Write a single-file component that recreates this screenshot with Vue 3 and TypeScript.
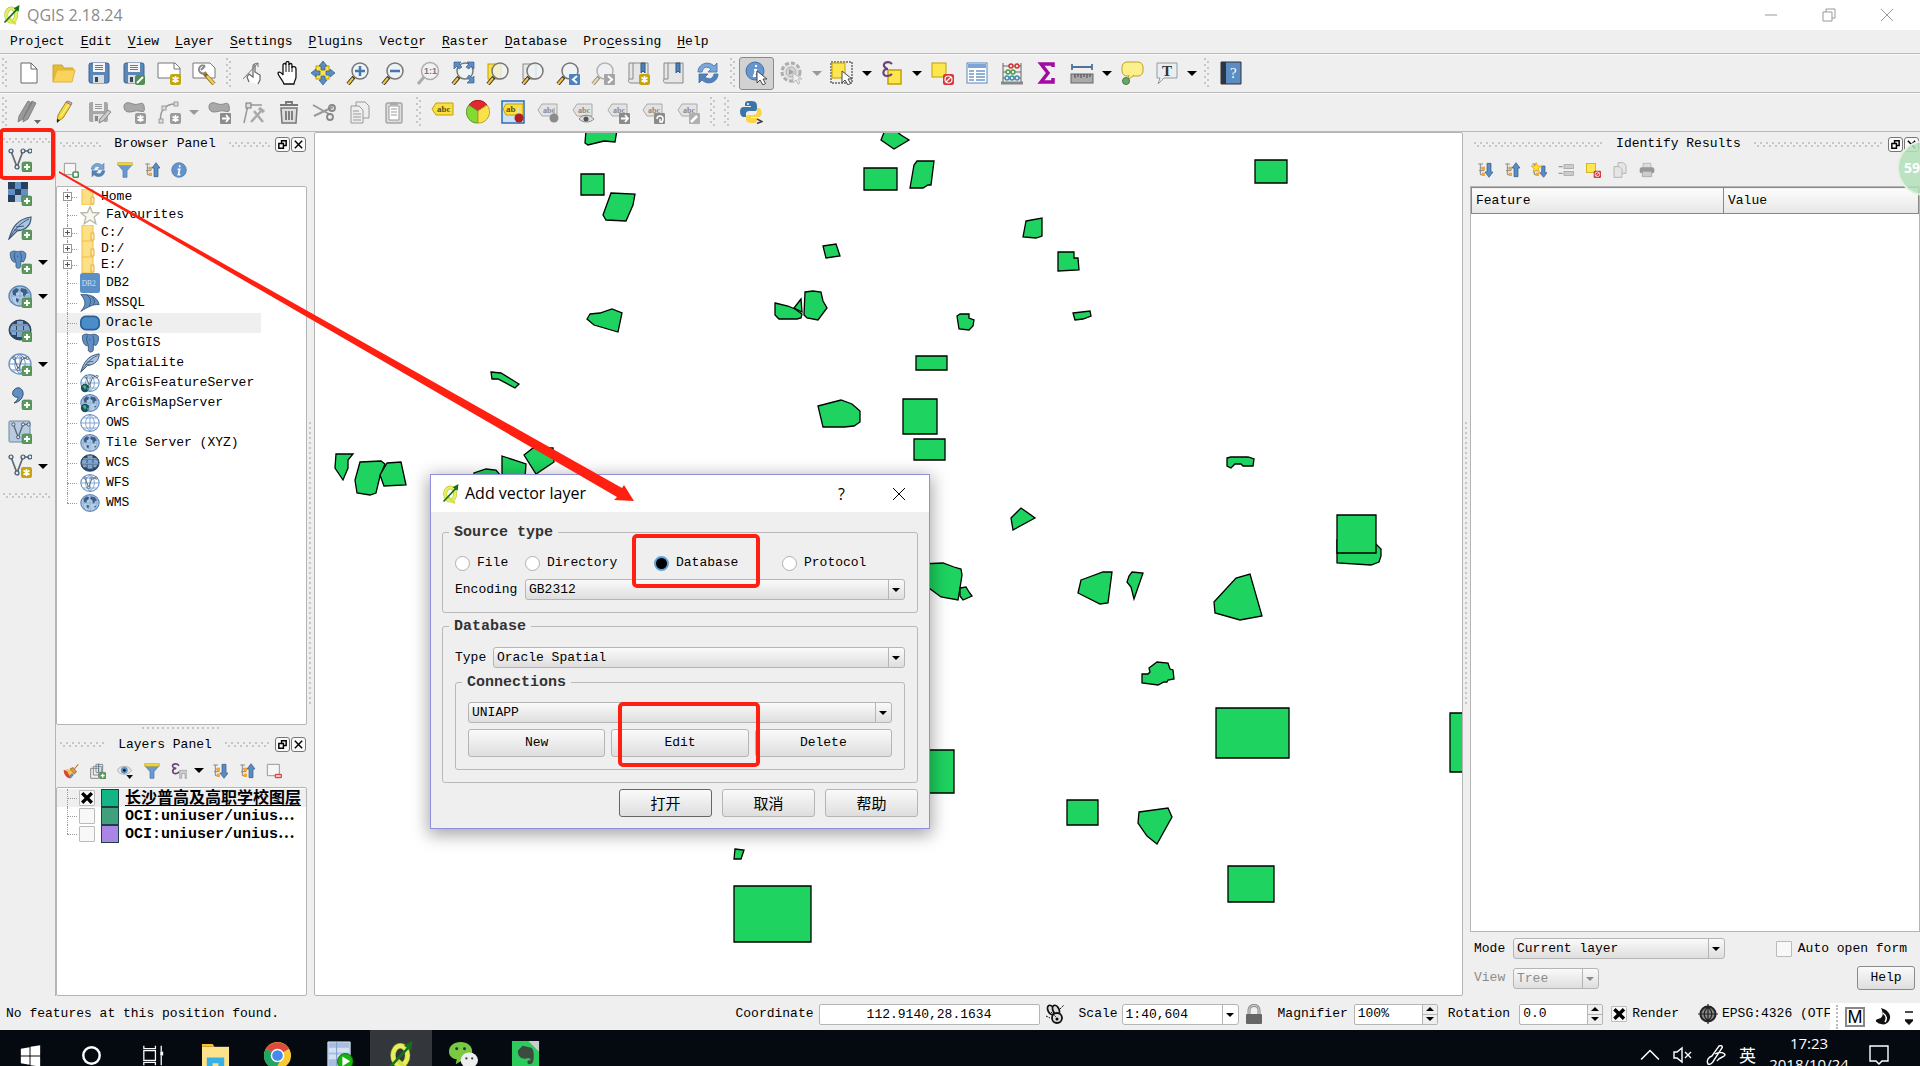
<script setup lang="ts">
import { ref } from 'vue'

interface Tool {
  icon: string
  label: string
  menu?: boolean
  off?: boolean
  active?: boolean
}
interface TreeItem {
  icon: string
  label: string
  kind: 'dir' | 'fav' | 'src'
  open?: boolean
}

const menus: [string, string, string][] = [
  ['Pro', 'j', 'ect'],
  ['', 'E', 'dit'],
  ['', 'V', 'iew'],
  ['', 'L', 'ayer'],
  ['', 'S', 'ettings'],
  ['', 'P', 'lugins'],
  ['Vect', 'o', 'r'],
  ['', 'R', 'aster'],
  ['', 'D', 'atabase'],
  ['Pro', 'c', 'essing'],
  ['', 'H', 'elp'],
]

const mainTools: Tool[][] = [
  [
    { icon: 'new', label: 'New' },
    { icon: 'open', label: 'Open' },
    { icon: 'save', label: 'Save' },
    { icon: 'saveas', label: 'Save As' },
    { icon: 'composer', label: 'New Print Composer' },
    { icon: 'manager', label: 'Composer Manager' },
  ],
  [
    { icon: 'touch', label: 'Touch Zoom and Pan' },
    { icon: 'hand', label: 'Pan Map' },
    { icon: 'pansel', label: 'Pan to Selection' },
    { icon: 'zoomin', label: 'Zoom In' },
    { icon: 'zoomout', label: 'Zoom Out' },
    { icon: 'zoomnative', label: 'Zoom to Native Resolution' },
    { icon: 'zoomfull', label: 'Zoom Full' },
    { icon: 'zoomsel', label: 'Zoom to Selection' },
    { icon: 'zoomlayer', label: 'Zoom to Layer' },
    { icon: 'zoomlast', label: 'Zoom Last' },
    { icon: 'zoomnext', label: 'Zoom Next' },
    { icon: 'bookmarknew', label: 'New Bookmark' },
    { icon: 'bookmark', label: 'Show Bookmarks' },
    { icon: 'refresh', label: 'Refresh' },
  ],
  [
    { icon: 'identify', label: 'Identify Features', active: true },
    { icon: 'action', label: 'Run Feature Action', menu: true, off: true },
    { icon: 'select', label: 'Select Features', menu: true },
    { icon: 'expression', label: 'Select by Expression', menu: true },
    { icon: 'deselect', label: 'Deselect Features' },
    { icon: 'table', label: 'Open Attribute Table' },
    { icon: 'abacus', label: 'Field Calculator' },
    { icon: 'sigma', label: 'Statistical Summary' },
    { icon: 'measure', label: 'Measure', menu: true },
    { icon: 'tips', label: 'Map Tips' },
    { icon: 'annotation', label: 'Text Annotation', menu: true },
  ],
  [{ icon: 'help', label: 'Help Contents' }],
]

const editTools: Tool[][] = [
  [
    { icon: 'pencils', label: 'Current Edits' },
    { icon: 'pencil', label: 'Toggle Editing' },
    { icon: 'saveedits', label: 'Save Layer Edits' },
    { icon: 'addfeature', label: 'Add Feature' },
    { icon: 'curve', label: 'Add Circular String', menu: true, off: true },
    { icon: 'movefeature', label: 'Move Feature' },
    { icon: 'nodetool', label: 'Node Tool' },
    { icon: 'trash', label: 'Delete Selected' },
    { icon: 'cut', label: 'Cut Features' },
    { icon: 'copy', label: 'Copy Features' },
    { icon: 'paste', label: 'Paste Features' },
  ],
  [
    { icon: 'label', label: 'Layer Labeling Options' },
    { icon: 'diagram', label: 'Layer Diagram Options' },
    { icon: 'labelpin', label: 'Highlight Pinned Labels' },
    { icon: 'labelpinoff', label: 'Pin Labels' },
    { icon: 'labeleye', label: 'Show Labels' },
    { icon: 'labelmove', label: 'Move Label' },
    { icon: 'labelrotate', label: 'Rotate Label' },
    { icon: 'labeledit', label: 'Change Label' },
  ],
  [],
  [{ icon: 'python', label: 'Python Console' }],
]

const layerTools: Tool[] = [
  { icon: 'addvector', label: 'Add Vector Layer' },
  { icon: 'addraster', label: 'Add Raster Layer' },
  { icon: 'addspatialite', label: 'Add SpatiaLite Layer' },
  { icon: 'addpostgis', label: 'Add PostGIS Layers', menu: true },
  { icon: 'addwms', label: 'Add WMS Layer', menu: true },
  { icon: 'addwcs', label: 'Add WCS Layer' },
  { icon: 'addwfs', label: 'Add WFS Layer', menu: true },
  { icon: 'addcsv', label: 'Add Delimited Text Layer' },
  { icon: 'addvirtual', label: 'Add Virtual Layer' },
  { icon: 'newshape', label: 'New Shapefile Layer', menu: true },
]

const browserTools: Tool[] = [
  { icon: 'addsel', label: 'Add Selected Layers' },
  { icon: 'refresh', label: 'Refresh' },
  { icon: 'filter', label: 'Filter Browser' },
  { icon: 'collapse', label: 'Collapse All' },
  { icon: 'info', label: 'Properties' },
]
const legendTools: Tool[] = [
  { icon: 'style', label: 'Layer Styling' },
  { icon: 'addgroup', label: 'Add Group' },
  { icon: 'eye', label: 'Manage Visibility' },
  { icon: 'filter', label: 'Filter Legend' },
  { icon: 'exprfilter', label: 'Filter by Expression', menu: true },
  { icon: 'expand', label: 'Expand All' },
  { icon: 'collapse', label: 'Collapse All' },
  { icon: 'remove', label: 'Remove Layer' },
]
const resultTools: Tool[] = [
  { icon: 'expand', label: 'Expand Tree' },
  { icon: 'collapse', label: 'Collapse Tree' },
  { icon: 'expandnew', label: 'Expand New Results' },
  { icon: 'form', label: 'Open Form' },
  { icon: 'deselect', label: 'Clear Results' },
  { icon: 'copyres', label: 'Copy Feature' },
  { icon: 'print', label: 'Print Response' },
]

const sources: TreeItem[] = [
  { icon: 'folder', label: 'Home', kind: 'dir' },
  { icon: 'star', label: 'Favourites', kind: 'fav' },
  { icon: 'folder', label: 'C:/', kind: 'dir' },
  { icon: 'folder', label: 'D:/', kind: 'dir' },
  { icon: 'folder', label: 'E:/', kind: 'dir' },
  { icon: 'db2', label: 'DB2', kind: 'src' },
  { icon: 'mssql', label: 'MSSQL', kind: 'src' },
  { icon: 'oracle', label: 'Oracle', kind: 'src', open: true },
  { icon: 'elephant', label: 'PostGIS', kind: 'src' },
  { icon: 'feather', label: 'SpatiaLite', kind: 'src' },
  { icon: 'arcfeature', label: 'ArcGisFeatureServer', kind: 'src' },
  { icon: 'arcmap', label: 'ArcGisMapServer', kind: 'src' },
  { icon: 'ows', label: 'OWS', kind: 'src' },
  { icon: 'earth', label: 'Tile Server (XYZ)', kind: 'src' },
  { icon: 'wcs', label: 'WCS', kind: 'src' },
  { icon: 'wfs', label: 'WFS', kind: 'src' },
  { icon: 'earth', label: 'WMS', kind: 'src' },
]

const layers = ref([
  { name: '长沙普高及高职学校图层', more: '', color: '#14b585', on: true },
  { name: 'OCI:uniuser/unius', more: '⋯', color: '#419f7b', on: false },
  { name: 'OCI:uniuser/unius', more: '⋯', color: '#a985e6', on: false },
])

const parcels: string[] = [
  '586,130 585,143 588,145 604,141 615,142 617,130',
  '885,130 881,140 894,149 909,140 901,135 895,130',
  '581,174 604,174 604,195 581,195',
  '611,193 635,194 633,205 626,221 606,220 603,215',
  '864,168 897,168 897,190 864,190',
  '917,161 934,161 931,185 928,185 923,188 910,188 914,165',
  '823,246 836,244 840,256 826,258',
  '775,303 788,306 795,309 802,314 801,318 797,319 779,319 775,315',
  '801,299 794,308 802,312',
  '805,292 813,291 821,292 823,301 827,308 818,320 807,318 804,315',
  '590,314 600,313 612,309 622,313 618,332 594,325 587,319',
  '491,372 501,373 519,384 515,388 498,379 492,379',
  '916,356 947,356 947,370 916,370',
  '818,406 841,400 852,404 860,411 860,422 854,426 844,427 823,427',
  '903,399 937,399 937,434 903,434',
  '914,439 945,439 945,460 914,460',
  '336,454 353,454 348,460 348,468 343,480 335,468',
  '360,462 381,461 385,464 380,476 376,493 370,495 357,493 355,480',
  '387,463 401,462 406,485 384,486 380,475',
  '474,476 474,473 486,469 496,470 501,476',
  '502,456 526,464 525,478 502,478',
  '524,455 533,448 553,448 554,462 536,474',
  '1255,160 1287,160 1287,183 1255,183',
  '1026,221 1042,218 1042,236 1036,238 1023,237',
  '1058,252 1074,252 1074,258 1078,258 1079,270 1058,271',
  '957,316 960,314 969,314 969,318 974,320 973,326 969,330 959,329',
  '1073,313 1090,311 1091,316 1083,319 1075,320',
  '1227,458 1231,457 1248,457 1254,459 1253,466 1243,466 1241,464 1235,464 1231,468 1227,466',
  '1011,518 1021,508 1035,518 1013,530',
  '1337,540 1376,544 1381,549 1381,556 1379,562 1371,565 1337,563',
  '1337,515 1376,515 1376,553 1337,553',
  '920,564 943,563 954,567 961,569 962,575 960,588 958,600 941,597 925,585',
  '960,588 966,587 969,592 972,596 963,600 960,596',
  '1081,580 1103,572 1112,572 1108,603 1100,604 1078,593',
  '1132,572 1143,573 1134,599 1131,587 1127,582 1129,576',
  '1214,602 1236,578 1250,574 1262,616 1240,620 1215,613',
  '1142,674 1148,674 1150,672 1149,668 1157,662 1168,663 1170,669 1173,670 1174,679 1168,680 1167,682 1164,682 1158,685 1142,683',
  '1216,708 1289,708 1289,758 1216,758',
  '1450,713 1480,713 1480,772 1450,772',
  '900,750 954,750 954,793 900,793',
  '1067,800 1098,800 1098,825 1067,825',
  '1139,812 1168,808 1172,817 1157,844 1147,836 1138,823',
  '1228,866 1274,866 1274,902 1228,902',
  '734,886 811,886 811,942 734,942',
  '735,849 744,850 741,859 734,859',
]

const sourceTypes = ['File', 'Directory', 'Database', 'Protocol']
const sourceType = ref('Database')
const magnifier = ref('100%')
const rotation = ref('0.0')
const coordinate = ref('112.9140,28.1634')
const render = ref(true)
const autoOpen = ref(false)
const taskApps = ['start', 'cortana', 'taskview', 'explorer', 'chrome', 'server', 'qgis', 'wechat', 'evernote']
</script>

<template>
  <div class="screen">
    <svg class="defs" width="0" height="0" aria-hidden="true">
      <defs>
        <g id="glass">
          <path d="M8 16 2 23" stroke="#333" stroke-width="4" />
          <path d="M7 17 2 23" stroke="#f5c63c" stroke-width="2" />
          <circle cx="14" cy="10" r="8" fill="#eef2f4" fill-opacity=".8" stroke="#777" stroke-width="1.5" />
        </g>
        <g id="plus">
          <rect x="14" y="14" width="10" height="10" rx="2" fill="#5c9a5e" stroke="#3c7a42" stroke-width=".6" />
          <path d="M19 16v6M16 19h6" stroke="#fff" stroke-width="2" />
        </g>
        <g id="gold">
          <rect x="13" y="13" width="11" height="11" rx="2" fill="#c7a30c" />
          <path d="M18.500 15v7M15.500 16.500l6 4M15.500 20.500l6-4" stroke="#fff" stroke-width="1.600" />
        </g>
        <g id="grey-star">
          <rect x="13" y="13" width="11" height="11" rx="2" fill="#9a9a9a" />
          <path d="M18.500 15v7M15.500 16.500l6 4M15.500 20.500l6-4" stroke="#fff" stroke-width="1.600" />
        </g>
        <g id="cursor">
          <path d="M12 10v12l3-3 3 5 2.500-1.500-2.500-4.500h4z" fill="#fff" stroke="#444" />
        </g>
        <g id="globe">
          <ellipse cx="12" cy="12" rx="11" ry="10" fill="#fff" stroke="#6d97c9" stroke-width="1.400" />
          <path d="M1 12h22M4 6h16M4 18h16M12 2v20M12 2c-7 5-7 15 0 20M12 2c7 5 7 15 0 20" fill="none" stroke="#6d97c9" />
        </g>
        <g id="earthg">
          <ellipse cx="12" cy="12" rx="11" ry="10" fill="#b4cce6" stroke="#5f87b3" stroke-width="1.400" />
          <path d="M4 7l4-3 3 1-1 3-2 1v3l-3-1zM13 4l5 1 3 4-3 1-1 3-2-1v-3l-3-2zM8 14l3 1-1 4-2-2zM17 16l3-1-2 3z" fill="#3c5f88" />
          <path d="M2 12h20M12 2v20M6 4c-3 5-3 11 0 16M18 4c3 5 3 11 0 16" fill="none" stroke="#7fa3ca" stroke-width=".7" />
        </g>
        <g id="wcsg">
          <ellipse cx="12" cy="12" rx="11" ry="10" fill="#2c4866" stroke="#263e58" />
          <path d="M3 8h5v4H2zM9 8h6v4H9zM16 8h5l1 4h-6zM9 14h6v5H9zM3 14h5v3H4zM16 14h5l-2 3h-3zM9 3h6v3H9z" fill="#7ea6d2" />
          <path d="M2 13h20M4 7h16" stroke="#fff" stroke-width=".8" />
        </g>
        <g id="vee">
          <path d="M3 3l6 16 6-16h6" fill="none" stroke="#5e6b78" stroke-width="1.700" />
          <g fill="#dfe8f2" stroke="#405468" stroke-width="1.200">
            <circle cx="3" cy="3" r="2" /><circle cx="9" cy="19" r="2" /><circle cx="15" cy="3" r="2" /><circle cx="22" cy="3" r="2" />
          </g>
        </g>
        <g id="elephantg">
          <path d="M3 3c4-3 7-1 9-1s7-2 10 2c1 4-1 9-3 11l-3-1v6c0 3-5 4-6 1v-6c-4 2-8-5-7-12z" fill="#5f8fc4" stroke="#34516f" />
          <path d="M9 3c-2 4-1 8 1 11M15 3c2 3 2 8 1 11M12 7v2" fill="none" stroke="#34516f" />
        </g>
        <g id="featherg">
          <path d="M1 23C4 12 9 3 23 1c0 8-5 13-14 14z" fill="#a9c4e0" stroke="#3c5877" stroke-width="1.200" />
          <path d="M1 23C6 14 12 7 21 3M8 11l8-1M6 14l6 0" fill="none" stroke="#3c5877" />
        </g>
        <g id="disk">
          <rect x="2" y="2" width="20" height="20" rx="2" fill="#5b86b8" stroke="#3f6490" />
          <path d="M6 2h12v9H6z" fill="#f4f4f4" /><path d="M8 4.500h8M8 6.500h8M8 8.500h8" stroke="#777" />
          <path d="M6 14h11v8H6z" fill="#dcdcdc" /><path d="M8 16h3v5H8z" fill="#2c4866" />
        </g>
        <g id="greydisk">
          <rect x="2" y="2" width="19" height="20" rx="2" fill="#a7a7a7" />
          <path d="M6 2h11v9H6z" fill="#eee" /><path d="M8 4.500h7M8 6.500h7M8 8.500h7" stroke="#999" />
          <path d="M6 14h11v8H6z" fill="#ddd" /><path d="M8 16h3v5H8z" fill="#888" />
        </g>
        <g id="tag">
          <path d="M2 10l4-6h15v12H6z" fill="#e3e3e3" stroke="#aaa" />
          <text x="7" y="13" font-size="8" font-family="Liberation Serif, serif" font-weight="bold" fill="#888">abc</text>
        </g>
        <g id="blob">
          <path d="M2 7c0-5 4-5 9-3 6 2 10-4 11 2s0 6-5 5c-4-1-5 1-10 1-3 0-5-2-5-5z" fill="#a9a9a9" stroke="#888" />
        </g>
        <g id="treelines">
          <path d="M2 3h7M5 3v16M5 9h4M5 19h4M3 13h8" fill="none" stroke="#888" stroke-width="1.500" />
          <rect x="7" y="7" width="5" height="5" fill="#f6a733" /><rect x="7" y="16" width="5" height="5" fill="#f6a733" />
        </g>
      </defs>

      <symbol id="i-new" viewBox="0 0 24 24"><path d="M4 2h10l6 6v14H4z" fill="#fff" stroke="#666" /><path d="M14 2v6h6" fill="none" stroke="#666" /></symbol>
      <symbol id="i-open" viewBox="0 0 24 24"><path d="M1 21V4h9l2 3h9v3" fill="#e3bb34" stroke="#d0a72b" /><path d="M5 9h18l-3 12H1z" fill="#fad35c" stroke="#e0b436" /></symbol>
      <symbol id="i-save" viewBox="0 0 24 24"><use href="#disk" /></symbol>
      <symbol id="i-saveas" viewBox="0 0 24 24"><use href="#disk" /><rect x="13" y="14" width="10" height="10" rx="2" fill="#4f8f55" /><path d="M15 22l6-6" stroke="#fff" stroke-width="2" /></symbol>
      <symbol id="i-composer" viewBox="0 0 24 24"><path d="M1 2h17l5 5v10H1z" fill="#fff" stroke="#777" /><path d="M17 2v6h6" fill="none" stroke="#777" /><use href="#gold" /></symbol>
      <symbol id="i-manager" viewBox="0 0 24 24"><path d="M1 2h17l5 5v10H1z" fill="#fff" stroke="#777" /><path d="M12 12l10 11" stroke="#8a6a1f" stroke-width="4" /><path d="M15 15l7 8" stroke="#f3cd56" stroke-width="2.500" /><path d="M13 5a4 4 0 1 0 1 6M9 9l4-4" fill="none" stroke="#888" stroke-width="2" /></symbol>
      <symbol id="i-touch" viewBox="0 0 24 24"><path d="M8 21l-2-5 2-3 4 3V5c0-2 2-2 2 0v6l5 3v5l-2 4" fill="#fff" stroke="#666" stroke-width="1.200" /><path d="M2 18L17 2M17 2l-4 1M17 2v4" fill="none" stroke="#777" /></symbol>
      <symbol id="i-hand" viewBox="0 0 24 24"><path d="M8 23c-1-4-6-8-6-11 1-2 4 0 5 2V4c0-2 3-2 3 0V2c0-2 3-2 3 0v2c0-2 3-2 3 0v3c0-2 4-2 4 1v8c0 3-2 4-2 7z" fill="#fff" stroke="#111" stroke-width="1.300" /><path d="M10 4v7M13 3v8M16 5v6" stroke="#111" /></symbol>
      <symbol id="i-pansel" viewBox="0 0 24 24"><rect x="5" y="5" width="13" height="13" fill="#fbe24a" stroke="#c4a000" /><g fill="#5b8cc4" stroke="#2c5a8c" stroke-width=".7"><path d="M12 0l4 5h-2v4h-4V5H8zM12 24l-4-5h2v-4h4v4h2zM0 12l5-4v2h4v4H5v2zM24 12l-5 4v-2h-4v-4h4V8z" /></g></symbol>
      <symbol id="i-zoomin" viewBox="0 0 24 24"><use href="#glass" /><path d="M14 5v10M9 10h10" stroke="#4477b0" stroke-width="2.500" /></symbol>
      <symbol id="i-zoomout" viewBox="0 0 24 24"><use href="#glass" /><path d="M9 10h10" stroke="#4477b0" stroke-width="2.500" /></symbol>
      <symbol id="i-zoomnative" viewBox="0 0 24 24"><g opacity=".65"><path d="M8 16L2 23" stroke="#888" stroke-width="3" /><circle cx="14" cy="10" r="8.500" fill="#f3f3f3" stroke="#888" stroke-width="1.500" /></g><text x="8" y="13" font-size="9" font-family="Liberation Sans, sans-serif" font-weight="bold" fill="#777">1:1</text></symbol>
      <symbol id="i-zoomfull" viewBox="0 0 24 24"><use href="#glass" /><path d="M3 1h7L8 3l3 3-3 2-2-3-3 3zM23 1h-7l2 2-3 3 3 2 2-3 3 3zM23 22v-7l-2 2-3-3-2 3 3 2-3 3z" fill="#5b8cc4" stroke="#35618f" stroke-width=".7" /></symbol>
      <symbol id="i-zoomsel" viewBox="0 0 24 24"><rect x="2" y="3" width="13" height="15" fill="#fbe24a" stroke="#c4a000" /><use href="#glass" /></symbol>
      <symbol id="i-zoomlayer" viewBox="0 0 24 24"><rect x="2" y="3" width="13" height="15" fill="#e8e8e8" stroke="#888" /><use href="#glass" /></symbol>
      <symbol id="i-zoomlast" viewBox="0 0 24 24"><use href="#glass" /><rect x="13" y="13" width="11" height="11" rx="1" fill="#4f81bb" /><path d="M21 15l-4 3.500 4 3.500" fill="none" stroke="#fff" stroke-width="2" /></symbol>
      <symbol id="i-zoomnext" viewBox="0 0 24 24"><g opacity=".5"><use href="#glass" /></g><rect x="13" y="13" width="11" height="11" rx="1" fill="#a5a5a5" /><path d="M17 15l4 3.500-4 3.500" fill="none" stroke="#fff" stroke-width="2" /></symbol>
      <symbol id="i-bookmark" viewBox="0 0 24 24"><path d="M3 2h19v20H5c-3 0-3-3-2-4z" fill="#e6e6e6" stroke="#888" /><path d="M7 2v16H3" fill="none" stroke="#888" /><path d="M15 2v10l2-2 2 2V2z" fill="#4f81bb" stroke="#2d5681" /></symbol>
      <symbol id="i-bookmarknew" viewBox="0 0 24 24"><path d="M3 2h19v20H5c-3 0-3-3-2-4z" fill="#e6e6e6" stroke="#888" /><path d="M7 2v16H3" fill="none" stroke="#888" /><path d="M15 2v10l2-2 2 2V2z" fill="#4f81bb" stroke="#2d5681" /><use href="#gold" /></symbol>
      <symbol id="i-refresh" viewBox="0 0 24 24"><path d="M2 11c0-8 10-12 16-6l3-3v9h-9l3-3c-4-3-8-2-9 3z" fill="#7aa7da" stroke="#426f9f" stroke-width=".8" /><path d="M22 13c0 8-10 12-16 6l-3 3v-9h9l-3 3c4 3 8 2 9-3z" fill="#5283bd" stroke="#426f9f" stroke-width=".8" /></symbol>
      <symbol id="i-identify" viewBox="0 0 24 24"><circle cx="10" cy="10" r="9" fill="#6795cc" stroke="#4272aa" /><path d="M11 4v2M9 9h2l-2 6h2" fill="none" stroke="#fff" stroke-width="2" /><use href="#cursor" /></symbol>
      <symbol id="i-action" viewBox="0 0 24 24"><g opacity=".75"><circle cx="11" cy="11" r="9" fill="#e2e2e2" stroke="#999" stroke-width="3" stroke-dasharray="4 2" /><circle cx="11" cy="11" r="5" fill="#ccc" stroke="#999" /><path d="M9 8l5 3-5 3z" fill="#888" /><path d="M13 12v10l3-3 2 4 2-1-2-4h4z" fill="#eee" stroke="#aaa" /></g></symbol>
      <symbol id="i-select" viewBox="0 0 24 24"><rect x="1" y="1" width="21" height="21" fill="none" stroke="#222" stroke-dasharray="2 1" /><rect x="2" y="2" width="13" height="15" fill="#fde74e" stroke="#c4a000" /><use href="#cursor" /></symbol>
      <symbol id="i-expression" viewBox="0 0 24 24"><rect x="8" y="9" width="13" height="14" fill="#fde74e" stroke="#c4a000" stroke-width="1.500" /><path d="M12 3c-3-3-9-2-8 2 1 2 2 3 4 3-6 0-6 7-1 7 2 0 4-1 5-2" fill="none" stroke="#6a4478" stroke-width="2.200" /></symbol>
      <symbol id="i-deselect" viewBox="0 0 24 24"><rect x="2" y="2" width="14" height="14" fill="#fde74e" stroke="#c4a000" /><rect x="13" y="13" width="11" height="11" rx="2" fill="#d9363c" /><circle cx="18.500" cy="18.500" r="3.500" fill="none" stroke="#fff" stroke-width="1.200" /><path d="M16 21l5-5" stroke="#fff" stroke-width="1.200" /></symbol>
      <symbol id="i-table" viewBox="0 0 24 24"><rect x="2" y="2" width="20" height="20" fill="#fff" stroke="#5b86b8" /><path d="M3 3h18v4H3z" fill="#7da6d6" /><path d="M4 10h5M11 10h9M4 13h5M11 13h9M4 16h5M11 16h9M4 19h5M11 19h9" stroke="#6d97c9" stroke-width="1.500" /></symbol>
      <symbol id="i-abacus" viewBox="0 0 24 24"><path d="M3 2v19M21 2v19M3 5h18M3 11h18M3 17h18" stroke="#666" /><path d="M1 22h22" stroke="#888" stroke-width="3" /><g stroke-width="1.400"><g fill="#f9dada" stroke="#c33"><circle cx="11" cy="5" r="2" /><circle cx="17" cy="5" r="2" /></g><g fill="#dff2df" stroke="#4a9a4a"><circle cx="8" cy="11" r="2" /><circle cx="13" cy="11" r="2" /></g><g fill="#dce8f6" stroke="#48a"><circle cx="7" cy="17" r="2" /><circle cx="12" cy="17" r="2" /><circle cx="17" cy="17" r="2" /></g></g></symbol>
      <symbol id="i-sigma" viewBox="0 0 24 24"><path d="M18 6V3H6l7 9-7 9h12v-4" fill="none" stroke="#a30aa3" stroke-width="3.500" /></symbol>
      <symbol id="i-measure" viewBox="0 0 24 24"><path d="M2 6h20M2 3v6M22 3v6" stroke="#4f7397" stroke-width="1.800" /><rect x="1" y="13" width="22" height="9" fill="#aaa" stroke="#666" /><path d="M5 13v4M8 13v3M11 13v4M14 13v3M17 13v4M20 13v3" stroke="#444" /></symbol>
      <symbol id="i-tips" viewBox="0 0 24 24"><rect x="2" y="1" width="21" height="14" rx="5" fill="#fdf08b" stroke="#b9a22b" /><path d="M9 14l-1 5 6-5" fill="#fdf08b" stroke="#b9a22b" /><circle cx="6" cy="20" r="3.500" fill="#6aa667" stroke="#447a48" /></symbol>
      <symbol id="i-annotation" viewBox="0 0 24 24"><path d="M2 2h20v15H9l-6 6 2-6H2z" fill="#e8eff2" stroke="#999" /><text x="7" y="15" font-size="15" font-family="Liberation Serif, serif" font-weight="bold" fill="#333">T</text></symbol>
      <symbol id="i-help" viewBox="0 0 24 24"><path d="M2 1h20v22H2z" fill="#5b8cc4" stroke="#333" /><path d="M2 1h5v22H2z" fill="#2b3544" /><text x="11" y="17" font-size="15" font-family="Liberation Serif, serif" fill="#fff">?</text></symbol>

      <symbol id="i-pencils" viewBox="0 0 24 24"><g fill="#999" stroke="#777" stroke-width=".8"><path d="M1 22l1-6L11 1l4 2-9 16zM6 22l1-6L15 1l4 2-8 16z" /></g><path d="M17 20h7l-3.500 4z" fill="#666" /></symbol>
      <symbol id="i-pencil" viewBox="0 0 24 24"><path d="M5 22l1-7L14 2l5 3-8 13z" fill="#f5d93f" stroke="#a08a1c" /><path d="M14 2l5 3 1-2-4-2z" fill="#e0a8a0" stroke="#977" /><path d="M5 23l0-4 3 1z" fill="#222" /><path d="M9 16l8-12" stroke="#fff6a8" /></symbol>
      <symbol id="i-saveedits" viewBox="0 0 24 24"><use href="#greydisk" /><path d="M12 23l1-4 8-9 3 2-8 9z" fill="#ccc" stroke="#888" /></symbol>
      <symbol id="i-addfeature" viewBox="0 0 24 24"><use href="#blob" /><use href="#grey-star" /></symbol>
      <symbol id="i-movefeature" viewBox="0 0 24 24"><use href="#blob" /><rect x="13" y="13" width="11" height="11" rx="1" fill="#8b8b8b" /><path d="M15 18.500h7M19 15l3 3.500-3 3.500" fill="none" stroke="#fff" stroke-width="1.800" /></symbol>
      <symbol id="i-curve" viewBox="0 0 24 24"><path d="M4 21C2 12 8 4 18 4" fill="none" stroke="#999" stroke-width="1.500" /><g fill="#ddd" stroke="#999"><rect x="2" y="19" width="4" height="4" /><rect x="5" y="6" width="4" height="4" /><rect x="17" y="2" width="4" height="4" /></g><use href="#grey-star" /></symbol>
      <symbol id="i-nodetool" viewBox="0 0 24 24"><path d="M2 23L6 5h14" fill="none" stroke="#999" stroke-width="1.500" /><rect x="4" y="3" width="5" height="5" fill="#ddd" stroke="#777" /><path d="M9 22L20 10M12 11l9 11" stroke="#aaa" stroke-width="2.500" /><path d="M17 8l5 4" stroke="#aaa" stroke-width="3.500" /></symbol>
      <symbol id="i-trash" viewBox="0 0 24 24"><path d="M4 8h16l-1 15H5z" fill="#ddd" stroke="#777" stroke-width="1.500" /><path d="M3 5h18M9 5V2h6v3M9 11v9M12 11v9M15 11v9" fill="none" stroke="#777" stroke-width="1.800" /></symbol>
      <symbol id="i-cut" viewBox="0 0 24 24"><path d="M1 5l16 9M2 16l19-9" stroke="#999" stroke-width="2" /><g fill="none" stroke="#888" stroke-width="1.800"><circle cx="20" cy="8" r="3" /><circle cx="18" cy="17" r="3" /></g></symbol>
      <symbol id="i-copy" viewBox="0 0 24 24"><g fill="#eee" stroke="#999"><path d="M9 2h9l4 4v12H9z" /><path d="M4 6h8l4 4v13H4z" /></g><path d="M6 11h6M6 14h8M6 17h8M6 20h8" stroke="#999" /></symbol>
      <symbol id="i-paste" viewBox="0 0 24 24"><rect x="4" y="3" width="16" height="20" rx="1" fill="#ddd" stroke="#888" /><path d="M7 6h10v14H7z" fill="#fff" stroke="#999" /><path d="M8 2h8v3H8z" fill="#aaa" /><path d="M9 9h6M9 12h6M9 15h6" stroke="#999" /></symbol>
      <symbol id="i-label" viewBox="0 0 24 24"><path d="M1 9l4-6h17v12H5z" fill="#fadf42" stroke="#c4a000" /><text x="6" y="12" font-size="9" font-family="Liberation Serif, serif" font-weight="bold" fill="#5c5010">abc</text></symbol>
      <symbol id="i-diagram" viewBox="0 0 24 24"><path d="M12 11L3 5a11 11 0 0 1 18 0z" fill="#e0282e" stroke="#a01a1e" /><path d="M12 11v12A11 11 0 0 1 3 5z" fill="#86d832" stroke="#56932a" /><path d="M12 11v12a11 11 0 0 0 9-18z" fill="#fbe24a" stroke="#b9a22b" /></symbol>
      <symbol id="i-labelpin" viewBox="0 0 24 24"><rect x="1" y="1" width="22" height="22" fill="#cfe1f4" stroke="#2d6db8" stroke-width="1.500" /><path d="M2 9l3-5h17v11H5z" fill="#fadf42" stroke="#c4a000" /><text x="5" y="12" font-size="9" font-family="Liberation Serif, serif" font-weight="bold" fill="#5c5010">ab</text><path d="M17 8v8" stroke="#ddd" stroke-width="2" /><circle cx="18" cy="18" r="4.500" fill="#b01e1e" /></symbol>
      <symbol id="i-labelpinoff" viewBox="0 0 24 24"><use href="#tag" /><path d="M18 8v8" stroke="#bbb" stroke-width="2" /><circle cx="18" cy="18" r="4.500" fill="#8c8c8c" /></symbol>
      <symbol id="i-labeleye" viewBox="0 0 24 24"><use href="#tag" /><path d="M8 19c3-5 11-5 15 0-4 4-11 4-15 0z" fill="#ddd" stroke="#888" /><circle cx="15" cy="19" r="2.500" fill="#555" /></symbol>
      <symbol id="i-labelmove" viewBox="0 0 24 24"><use href="#tag" /><rect x="13" y="13" width="11" height="11" rx="1" fill="#8b8b8b" /><path d="M15 18.500h7M19 15l3 3.500-3 3.500" fill="none" stroke="#fff" stroke-width="1.800" /></symbol>
      <symbol id="i-labelrotate" viewBox="0 0 24 24"><use href="#tag" /><rect x="13" y="13" width="11" height="11" rx="1" fill="#8b8b8b" /><path d="M16 19a3 3 0 1 1 3 3M19 19v3h3" fill="none" stroke="#fff" stroke-width="1.500" /></symbol>
      <symbol id="i-labeledit" viewBox="0 0 24 24"><use href="#tag" /><rect x="13" y="13" width="11" height="11" rx="1" fill="#b0b0b0" /><path d="M15 22l6-6" stroke="#fff" stroke-width="2.500" /></symbol>
      <symbol id="i-python" viewBox="0 0 24 24"><path d="M11 1c-5 0-5 1-5 5h6v1H4c-4 0-4 9 0 10h3v-3c0-3 2-3 5-3h4c2 0 2-2 2-5 0-4-2-5-7-5z" fill="#3b76aa" /><path d="M13 23c5 0 5-1 5-5h-6v-1h8c4 0 3-9 0-9h-2v3c0 3-2 4-5 4H9c-2 0-2 1-2 4 0 3 2 4 6 4z" fill="#fbd343" /><circle cx="9" cy="4" r="1" fill="#fff" /><path d="M18 19l5 2.500-5 2" fill="none" stroke="#444" stroke-width="1.500" /></symbol>

      <symbol id="i-addvector" viewBox="0 0 24 24"><use href="#vee" /><use href="#plus" /></symbol>
      <symbol id="i-addraster" viewBox="0 0 24 24"><rect width="20" height="20" fill="#5f8fc4" /><path d="M0 0h7v7H0zM13 0h7v7h-7zM7 7h6v6H7zM0 13h7v7H0z" fill="#26405e" /><path d="M7 13h6v7H7z" fill="#a9c4e0" /><use href="#plus" /></symbol>
      <symbol id="i-addspatialite" viewBox="0 0 24 24"><use href="#featherg" /><use href="#plus" /></symbol>
      <symbol id="i-addpostgis" viewBox="0 0 24 24"><g transform="scale(.8)"><use href="#elephantg" /></g><use href="#plus" /></symbol>
      <symbol id="i-addwms" viewBox="0 0 24 24"><use href="#earthg" /><use href="#plus" /></symbol>
      <symbol id="i-addwcs" viewBox="0 0 24 24"><use href="#wcsg" /><use href="#plus" /></symbol>
      <symbol id="i-addwfs" viewBox="0 0 24 24"><use href="#globe" /><g transform="translate(4 4) scale(.7)"><use href="#vee" /></g><use href="#plus" /></symbol>
      <symbol id="i-addcsv" viewBox="0 0 24 24"><path d="M6 4c4-5 10-1 9 5-1 4-4 7-9 8 3-2 4-4 4-6-5 1-7-4-4-7z" fill="#5f8fc4" stroke="#34516f" /><use href="#plus" /></symbol>
      <symbol id="i-addvirtual" viewBox="0 0 24 24"><rect x="1" y="1" width="21" height="21" rx="1" fill="#b9cbe0" stroke="#6d86a3" /><g transform="translate(3 2) scale(.8)"><use href="#vee" /></g><use href="#plus" /></symbol>
      <symbol id="i-newshape" viewBox="0 0 24 24"><use href="#vee" /><use href="#gold" /></symbol>

      <symbol id="i-addsel" viewBox="0 0 24 24"><path d="M2 2h17v17H2z" fill="#f5f5f5" stroke="#999" stroke-width="1.500" /><rect x="15" y="15" width="8" height="8" rx="2" fill="#fff" stroke="#4f8f55" stroke-width="2.500" /></symbol>
      <symbol id="i-filter" viewBox="0 0 24 24"><path d="M2 5h20l-7 8v10h-6V13z" fill="#6b9ad0" stroke="#4272aa" /><path d="M1 1h22v4H1z" fill="#f5d93f" stroke="#b9a22b" /></symbol>
      <symbol id="i-collapse" viewBox="0 0 24 24"><use href="#treelines" /><path d="M18 1l6 8h-3v13h-6V9h-3z" fill="#5b8cc4" stroke="#2d5681" /></symbol>
      <symbol id="i-expand" viewBox="0 0 24 24"><use href="#treelines" /><path d="M18 23l6-8h-3V2h-6v13h-3z" fill="#5b8cc4" stroke="#2d5681" /></symbol>
      <symbol id="i-expandnew" viewBox="0 0 24 24"><use href="#treelines" /><path d="M19 23l5-7h-3V6h-5v10h-3z" fill="#5b8cc4" stroke="#2d5681" /><path d="M8 1l2 5 6 0-5 4 2 6-5-4-5 4 2-6-5-4h6z" fill="#ffe12e" stroke="#f0981c" /></symbol>
      <symbol id="i-info" viewBox="0 0 24 24"><circle cx="12" cy="12" r="11" fill="#6493cb" stroke="#4272aa" /><path d="M13 5v3M10 11h3l-2 8h3" fill="none" stroke="#fff" stroke-width="2.500" /></symbol>
      <symbol id="i-style" viewBox="0 0 24 24"><path d="M1 10l8 3 3 10c-7 0-11-6-11-13z" fill="#d84436" /><path d="M4 9l9 1 3 8-5 3z" fill="#f6c443" /><path d="M9 20l5-5 2 3-4 5z" fill="#5b8cc4" /><path d="M11 9l6 7 3-3-5-6zM17 9l6-7" fill="#dba15b" stroke="#b97c35" stroke-width="1.600" /></symbol>
      <symbol id="i-addgroup" viewBox="0 0 24 24"><path d="M1 8h12v15H1zM5 5h12v13H5zM9 2h10v12H9z" fill="none" stroke="#888" stroke-width="1.500" /><path d="M13 1v12" stroke="#4477b0" stroke-width="1.500" /><use href="#plus" /></symbol>
      <symbol id="i-eye" viewBox="0 0 24 24"><path d="M0 11c5-8 17-8 22 0-5 8-17 8-22 0z" fill="#e3e3e3" stroke="#999" /><circle cx="11" cy="11" r="5" fill="#5b8cc4" /><circle cx="11" cy="11" r="2" fill="#111" /><path d="M14 18h10l-5 6z" fill="#111" /></symbol>
      <symbol id="i-exprfilter" viewBox="0 0 24 24"><path d="M12 4C8-1 0 2 3 6c1 1 3 2 5 2-7 0-7 8-1 8 2 0 4-1 5-3" fill="none" stroke="#6a4478" stroke-width="2.500" /><path d="M13 11h11v12h-3v-7h-5v7h-3z" fill="#ccc" stroke="#999" /></symbol>
      <symbol id="i-remove" viewBox="0 0 24 24"><path d="M2 2h18v17H2z" fill="#f5f5f5" stroke="#999" stroke-width="1.500" /><rect x="13" y="16" width="11" height="7" rx="2" fill="#df4a4e" /><path d="M15 19.500h7" stroke="#fff" stroke-width="2" /></symbol>
      <symbol id="i-form" viewBox="0 0 24 24"><path d="M1 7h6M1 17h6" stroke="#999" stroke-width="2" /><g fill="#ccc" stroke="#999"><rect x="9" y="4" width="14" height="6" /><rect x="9" y="14" width="14" height="6" /></g></symbol>
      <symbol id="i-copyres" viewBox="0 0 24 24"><g fill="#e5e5e5" stroke="#b5b5b5" stroke-width="1.500"><path d="M9 1h8l4 4v12H9z" /><path d="M3 7h8l4 4v12H3z" /></g></symbol>
      <symbol id="i-print" viewBox="0 0 24 24"><path d="M6 2h12v7H6z" fill="#ddd" stroke="#aaa" /><rect x="1" y="8" width="22" height="9" rx="3" fill="#999" /><path d="M5 14h14v8H5z" fill="#ccc" stroke="#999" /></symbol>

      <symbol id="i-folder" viewBox="0 0 16 16"><path d="M2 0h11v16H2z" fill="#fddf86" stroke="#ecc04a" /><path d="M11 8h3v7h-3z" fill="#fbe9ad" stroke="#e5b238" /></symbol>
      <symbol id="i-star" viewBox="0 0 24 24"><path d="M12 2l3 7 8 .5-6 5 2 8-7-4.500-7 4.500 2-8-6-5L9 9z" fill="#f7f7f2" stroke="#b8b8a4" stroke-width="1.600" /></symbol>
      <symbol id="i-db2" viewBox="0 0 24 24"><rect width="24" height="24" rx="3" fill="#5c8fc6" /><text x="2" y="15" font-size="9" font-family="Liberation Serif, serif" fill="#cfe0f2">DB2</text></symbol>
      <symbol id="i-mssql" viewBox="0 0 24 24"><path d="M1 2c12-1 20 3 22 12C16 13 9 17 1 22 8 14 7 9 1 2z" fill="#5f8fc4" stroke="#34516f" /><path d="M8 2c5 4 6 8 3 14M14 4c4 4 4 7 2 10" fill="none" stroke="#34516f" /></symbol>
      <symbol id="i-oracle" viewBox="0 0 24 24"><rect x="1" y="4" width="22" height="16" rx="6" fill="#4a8dcb" stroke="#2c5f93" stroke-width="2" /></symbol>
      <symbol id="i-elephant" viewBox="0 0 24 24"><use href="#elephantg" /></symbol>
      <symbol id="i-feather" viewBox="0 0 24 24"><use href="#featherg" /></symbol>
      <symbol id="i-earth" viewBox="0 0 24 24"><use href="#earthg" /></symbol>
      <symbol id="i-ows" viewBox="0 0 24 24"><use href="#globe" /></symbol>
      <symbol id="i-wcs" viewBox="0 0 24 24"><use href="#wcsg" /></symbol>
      <symbol id="i-wfs" viewBox="0 0 24 24"><use href="#globe" /><g transform="translate(4 4) scale(.7)"><use href="#vee" /></g></symbol>
      <symbol id="i-arcfeature" viewBox="0 0 24 24"><use href="#globe" /><g transform="translate(5 2) scale(.7)"><use href="#vee" /></g><circle cx="6" cy="18" r="5" fill="#18506a" /><path d="M3 16l3-2 2 3-2 3zM8 19l3-2-1 4z" fill="#4fb06a" /></symbol>
      <symbol id="i-arcmap" viewBox="0 0 24 24"><use href="#earthg" /><circle cx="6" cy="18" r="5" fill="#18506a" /><path d="M3 16l3-2 2 3-2 3zM8 19l3-2-1 4z" fill="#4fb06a" /></symbol>

      <symbol id="i-qlogo" viewBox="0 0 24 24"><ellipse cx="11" cy="12" rx="6" ry="8" fill="none" stroke="#a8b032" stroke-width="4.500" /><ellipse cx="11" cy="12" rx="6" ry="8" fill="none" stroke="#e6f05a" stroke-width="3.500" /><path d="M8 16c4 0 4 7 9 6" fill="none" stroke="#d6e048" stroke-width="3" /><path d="M3 21L19 4" stroke="#14701c" stroke-width="2" /><path d="M21 0l-1 8-6-4z" fill="#14701c" /></symbol>

      <symbol id="t-start" viewBox="0 0 30 30"><path d="M5 8l9-1.500V15H5zM15 6l10-1.500V15H15zM5 16h9v8.500L5 23zM15 16h10v10.500L15 25z" fill="#fff" /></symbol>
      <symbol id="t-cortana" viewBox="0 0 30 30"><circle cx="15" cy="15" r="8.500" fill="none" stroke="#fff" stroke-width="2.500" /></symbol>
      <symbol id="t-taskview" viewBox="0 0 30 30"><path d="M5 10h12v10H5zM5 5v3h12V5M5 25v-3h12v3M23 5v6M23 15v10" fill="none" stroke="#fff" stroke-width="1.300" /><path d="M22 11h3v4h-3z" fill="#fff" /></symbol>
      <symbol id="t-explorer" viewBox="0 0 30 30"><path d="M1 3h11l2 3H1z" fill="#fbc02d" /><path d="M1 6h28v24H1z" fill="#fde28c" /><path d="M6 30V17h18v13h-6v-7h-6v7z" fill="#35b1e6" /></symbol>
      <symbol id="t-chrome" viewBox="0 0 30 30"><circle cx="15" cy="15" r="14" fill="#f7c935" /><path d="M15 15L3 8a14 14 0 0 1 24 0z" fill="#dd4b3e" /><path d="M15 15L3 8a14 14 0 0 0 10 21l5-9z" fill="#21a464" /><circle cx="15" cy="15" r="7" fill="#fff" /><circle cx="15" cy="15" r="5.500" fill="#4688f0" /></symbol>
      <symbol id="t-server" viewBox="0 0 30 30"><path d="M3 1h23v29H3z" fill="#a7bedf" stroke="#dce7f5" /><path d="M4 7h21v5H4zM4 14h21v5H4z" fill="#d3e1f3" /><path d="M12 1v29" stroke="#7e9bc6" /><circle cx="21" cy="21" r="8" fill="#17b30f" stroke="#0b7607" /><path d="M18 16l8 5-8 5z" fill="#fff" /></symbol>
      <symbol id="t-qgis" viewBox="0 0 24 24"><use href="#i-qlogo" /></symbol>
      <symbol id="t-wechat" viewBox="0 0 30 30"><path d="M12 1c7 0 12 4 12 10s-5 10-12 10l-5 3 1-5C3 18 0 15 0 11 0 5 5 1 12 1z" fill="#7ac943" /><circle cx="8" cy="8" r="1.500" fill="#234" /><circle cx="16" cy="8" r="1.500" fill="#234" /><ellipse cx="21" cy="20" rx="9" ry="8" fill="#eee" /><circle cx="18" cy="18" r="1.200" fill="#444" /><circle cx="24" cy="18" r="1.200" fill="#444" /></symbol>
      <symbol id="t-evernote" viewBox="0 0 30 30"><path d="M1 0h28v30H1z" fill="#2fca5d" /><path d="M18 0h11v11z" fill="#ccc" /><path d="M7 10l5-5 9 2c3 2 3 9 2 14-1 4-6 4-6 1s3-2 3-1c1-4-2-3-4-3-4 1-9-1-9-8z" fill="#3c4a40" /></symbol>
    </svg>

    <header class="titlebar">
      <svg class="logo"><use href="#i-qlogo" /></svg>
      <h1>QGIS 2.18.24</h1>
      <div class="win-buttons">
        <button type="button" aria-label="Minimize"><svg viewBox="0 0 14 14"><path d="M1 7h12" /></svg></button>
        <button type="button" aria-label="Restore"><svg viewBox="0 0 14 14"><path d="M1 4h9v9H1zM4 4V1h9v9h-3" /></svg></button>
        <button type="button" aria-label="Close"><svg viewBox="0 0 14 14"><path d="M1 1l12 12M13 1L1 13" /></svg></button>
      </div>
    </header>

    <nav class="menubar">
      <button v-for="m in menus" :key="m.join('')" type="button">{{ m[0] }}<u>{{ m[1] }}</u>{{ m[2] }}</button>
    </nav>

    <div v-for="(bar, b) in [mainTools, editTools]" :key="b" class="toolbar">
      <template v-for="(group, g) in bar" :key="g">
        <span class="grip-v"></span>
        <template v-for="t in group" :key="t.icon">
          <button type="button" class="tool" :class="{ active: t.active }" :aria-label="t.label">
            <svg><use :href="'#i-' + t.icon" /></svg>
          </button>
          <button v-if="t.menu" type="button" class="drop" :class="{ off: t.off }" :aria-label="t.label + ' menu'"></button>
        </template>
      </template>
    </div>

    <main class="workspace">
      <aside class="layerbar">
        <span class="grip-h"></span>
        <div v-for="t in layerTools" :key="t.icon" class="layer-tool">
          <button type="button" class="tool" :aria-label="t.label"><svg><use :href="'#i-' + t.icon" /></svg></button>
          <button v-if="t.menu" type="button" class="drop" :aria-label="t.label + ' menu'"></button>
        </div>
        <span class="grip-h"></span>
      </aside>

      <section class="dock left-dock">
        <div class="dock-title">
          <span class="grip-h"></span><h2>Browser Panel</h2><span class="grip-h"></span>
          <button type="button" aria-label="Float"><svg viewBox="0 0 12 12"><path d="M2 5h5v5H2zM5 5V2h5v5H7" /></svg></button>
          <button type="button" aria-label="Close"><svg viewBox="0 0 12 12"><path d="M2 2l8 8M10 2l-8 8" /></svg></button>
        </div>
        <div class="dock-tools">
          <button v-for="t in browserTools" :key="t.icon" type="button" class="mini" :aria-label="t.label"><svg><use :href="'#i-' + t.icon" /></svg></button>
        </div>
        <ul class="tree browser-tree">
          <li v-for="s in sources" :key="s.label" :class="[s.kind, { current: s.open }]">
            <span class="branch"><i v-if="s.kind === 'dir'"></i></span>
            <svg><use :href="'#i-' + s.icon" /></svg>
            <span>{{ s.label }}</span>
          </li>
        </ul>
        <div class="split-h"></div>
        <div class="dock-title">
          <span class="grip-h"></span><h2>Layers Panel</h2><span class="grip-h"></span>
          <button type="button" aria-label="Float"><svg viewBox="0 0 12 12"><path d="M2 5h5v5H2zM5 5V2h5v5H7" /></svg></button>
          <button type="button" aria-label="Close"><svg viewBox="0 0 12 12"><path d="M2 2l8 8M10 2l-8 8" /></svg></button>
        </div>
        <div class="dock-tools">
          <template v-for="t in legendTools" :key="t.icon">
            <button type="button" class="mini" :aria-label="t.label"><svg><use :href="'#i-' + t.icon" /></svg></button>
            <button v-if="t.menu" type="button" class="drop" :aria-label="t.label + ' menu'"></button>
          </template>
        </div>
        <ul class="tree layer-tree">
          <li v-for="(l, i) in layers" :key="i" :class="{ current: l.on }">
            <span class="branch"></span>
            <label>
              <input v-model="l.on" type="checkbox" />
              <span class="swatch" :style="{ background: l.color }"></span>
              <b>{{ l.name }}<span class="more">{{ l.more }}</span></b>
            </label>
          </li>
        </ul>
      </section>

      <div class="split-v"></div>

      <section class="map">
        <svg width="100%" height="100%">
          <g transform="translate(-315 -133)">
            <polygon v-for="p in parcels" :key="p" :points="p" />
          </g>
        </svg>
      </section>

      <div class="split-v"></div>

      <section class="dock right-dock">
        <div class="dock-title">
          <span class="grip-h"></span><h2>Identify Results</h2><span class="grip-h"></span>
          <button type="button" aria-label="Float"><svg viewBox="0 0 12 12"><path d="M2 5h5v5H2zM5 5V2h5v5H7" /></svg></button>
          <button type="button" aria-label="Close"><svg viewBox="0 0 12 12"><path d="M2 2l8 8M10 2l-8 8" /></svg></button>
        </div>
        <div class="dock-tools">
          <button v-for="t in resultTools" :key="t.icon" type="button" class="mini" :aria-label="t.label"><svg><use :href="'#i-' + t.icon" /></svg></button>
        </div>
        <div class="results">
          <table>
            <thead><tr><th>Feature</th><th>Value</th></tr></thead>
          </table>
        </div>
        <div class="result-form">
          <div class="form-row">
            <label for="mode">Mode</label>
            <span class="combo mode"><select id="mode"><option>Current layer</option></select></span>
            <label class="auto"><input v-model="autoOpen" type="checkbox" />Auto open form</label>
          </div>
          <div class="form-row">
            <label for="view" class="dim">View</label>
            <span class="combo view dim"><select id="view" disabled><option>Tree</option></select></span>
            <button type="button" class="push help">Help</button>
          </div>
        </div>
      </section>
    </main>

    <footer class="statusbar">
      <p>No features at this position found.</p>
      <label for="coord" class="coord-label">Coordinate</label>
      <input id="coord" v-model="coordinate" class="coord" type="text" />
      <svg class="extent" viewBox="0 0 20 20"><g fill="#ddd" stroke="#111" stroke-width="1.800"><ellipse cx="6" cy="6" rx="3" ry="5" transform="rotate(-25 6 6)" /><ellipse cx="11" cy="6" rx="3" ry="5" transform="rotate(-25 11 6)" /><circle cx="12" cy="14" r="5" /></g><circle cx="12" cy="15" r="1.500" /><path d="M15 5l4-4M1 12l4 2M6 8l5 5" stroke="#111" stroke-dasharray="2 1" /></svg>
      <label for="scale" class="scale-label">Scale</label>
      <span class="combo scale"><select id="scale"><option>1:40,604</option></select></span>
      <svg class="lock" viewBox="0 0 16 20"><path d="M3 11V6c0-6 10-6 10 0v5" fill="none" stroke="#888" stroke-width="3" /><path d="M3 11V6c0-6 10-6 10 0v5" fill="none" stroke="#ddd" /><rect y="10" width="16" height="10" rx="1" fill="#666" /></svg>
      <label for="mag" class="mag-label">Magnifier</label>
      <span class="spin"><input id="mag" v-model="magnifier" type="text" /><span><button type="button" aria-label="Increase"></button><button type="button" aria-label="Decrease"></button></span></span>
      <label for="rot" class="rot-label">Rotation</label>
      <span class="spin"><input id="rot" v-model="rotation" type="text" /><span><button type="button" aria-label="Increase"></button><button type="button" aria-label="Decrease"></button></span></span>
      <label class="render"><input v-model="render" type="checkbox" />Render</label>
      <button type="button" class="crs"><svg viewBox="0 0 20 20"><circle cx="10" cy="10" r="7.500" fill="#888" stroke="#222" stroke-width="2" /><path d="M10 0v20M0 10h20M10 3c-5 4-5 10 0 14M10 3c5 4 5 10 0 14" fill="none" stroke="#222" stroke-width="1.200" /></svg>EPSG:4326 (OTF)</button>
      <div class="ime"><i></i><b>M</b><svg viewBox="0 0 20 20"><path d="M8 1c8 2 11 8 8 13-2 3-5 4-8 3-5-1-7-4-3-5 5-1 6-5 3-11z" fill="#111" /><path d="M10 6c4 3 4 6 2 9" fill="none" stroke="#fff" stroke-width="1.500" /></svg><svg class="ime-more" viewBox="0 0 8 16"><path d="M0 3h8M0 11h8l-4 4z" fill="#111" stroke="#111" stroke-width="1.500" /></svg></div>
    </footer>

    <footer class="taskbar">
      <div class="task-inner">
        <button v-for="a in taskApps" :key="a" type="button" class="task" :class="{ running: a === 'qgis' }" :aria-label="a"><svg><use :href="'#t-' + a" /></svg></button>
        <div class="tray">
          <svg viewBox="0 0 18 18"><path d="M1 13l8-8 8 8" /></svg>
          <svg viewBox="0 0 20 18"><path d="M1 6h3l5-4v14l-5-4H1zM12 6l6 6M18 6l-6 6" /></svg>
          <svg viewBox="0 0 20 20"><path d="M2 19c-2-4 1-7 4-8l7-10c2-1 4 0 3 2L8 15c-1 3-4 5-6 4zM9 9c5-3 10-1 10 1s-6 2-8 6" /></svg>
          <span class="lang">英</span>
          <span class="clock">17:23<br />2018/10/24</span>
          <svg class="notice" viewBox="0 0 20 20"><path d="M1 1h18v15h-6l-3 3-3-3H1z" /></svg>
        </div>
      </div>
    </footer>

    <form class="dialog" role="dialog" aria-label="Add vector layer" @submit.prevent>
      <div class="dialog-title">
        <svg class="logo"><use href="#i-qlogo" /></svg>
        <h2>Add vector layer</h2>
        <button type="button" aria-label="What's this">?</button>
        <button type="button" aria-label="Close"><svg viewBox="0 0 14 14"><path d="M1 1l12 12M13 1L1 13" /></svg></button>
      </div>
      <div class="dialog-body">
        <fieldset>
          <legend>Source type</legend>
          <div class="radios">
            <label v-for="s in sourceTypes" :key="s"><input v-model="sourceType" type="radio" name="source" :value="s" />{{ s }}</label>
          </div>
          <div class="field">
            <label for="enc" class="enc-label">Encoding</label>
            <span class="combo"><select id="enc"><option>GB2312</option></select></span>
          </div>
        </fieldset>
        <fieldset>
          <legend>Database</legend>
          <div class="field">
            <label for="type" class="type-label">Type</label>
            <span class="combo"><select id="type"><option>Oracle Spatial</option></select></span>
          </div>
          <fieldset class="inner">
            <legend>Connections</legend>
            <div class="field">
              <span class="combo"><select aria-label="Connections"><option>UNIAPP</option></select></span>
            </div>
            <div class="conn-buttons">
              <button type="button" class="push">New</button>
              <button type="button" class="push">Edit</button>
              <button type="button" class="push">Delete</button>
            </div>
          </fieldset>
        </fieldset>
        <div class="actions">
          <button type="submit" class="push default">打开</button>
          <button type="button" class="push">取消</button>
          <button type="button" class="push">帮助</button>
        </div>
      </div>
    </form>

    <div class="speed"><span>59</span></div>

    <svg class="marks" aria-hidden="true">
      <polygon points="59,171 622,488 624,485 634,501 614,500 617,497 59,173" fill="#ff2011" />
      <g fill="none" stroke="#ff2011" stroke-width="4">
        <rect x="1" y="130" width="52" height="48" rx="3" />
        <rect x="634" y="536" width="124" height="50" rx="3" />
        <rect x="620" y="704" width="138" height="61" rx="3" />
      </g>
    </svg>
  </div>
</template>

<style>
html, body { margin: 0; overflow: hidden; }
</style>

<style scoped>
.screen {
  position: relative;
  display: flex;
  flex-direction: column;
  height: 100vh;
  overflow: hidden;
  background: #efefef;
  color: #000;
  font: 13px/20px "Liberation Mono", "Noto Sans CJK SC", monospace;
}
.screen * { box-sizing: border-box; }
.defs { display: none; }
button, select, input { font: inherit; color: inherit; margin: 0; padding: 0; }
button { border: 0; background: none; }
h1, h2, p, ul { margin: 0; padding: 0; font-weight: normal; }

.titlebar { display: flex; align-items: center; height: 30px; padding: 0 4px 0 2px; background: #fff; flex: none; }
.logo { width: 20px; height: 20px; flex: none; }
.titlebar h1 { margin-left: 5px; color: #8a8a8a; font: 16px/28px "Open Sans", sans-serif; }
.win-buttons { display: flex; margin-left: auto; }
.win-buttons button { width: 58px; height: 28px; display: grid; place-items: center; }
.win-buttons svg { width: 14px; height: 14px; fill: none; stroke: #999; }

.menubar { display: flex; gap: 16px; height: 24px; padding: 1px 0 0 10px; border-bottom: 1px solid #bababa; flex: none; }
.menubar button { line-height: 22px; }
.menubar u { text-underline-offset: 2px; }

.toolbar { display: flex; align-items: center; height: 39px; border-bottom: 1px solid #bababa; box-shadow: inset 0 1px #f8f8f8; flex: none; }
.tool { width: 35px; height: 33px; display: grid; place-items: center; flex: none; border-radius: 3px; }
.tool svg { width: 24px; height: 24px; }
.tool.active { border: 1px solid #8a8a8a; background: #d2d2d2; }
.drop { width: 15px; height: 20px; flex: none; display: grid; place-items: center; }
.drop::before { content: ""; border: 5px solid transparent; border-top-color: #000; border-bottom: 0; }
.drop.off::before { border-top-color: #999; }
.grip-v, .grip-h {
  background-image:
    conic-gradient(at 2px 2px, transparent 270deg, #c6c6c6 0),
    conic-gradient(at 2px 2px, transparent 270deg, #c6c6c6 0);
}
.grip-v { width: 5px; height: 30px; margin: 0 4px 0 5px; flex: none; background-size: 6px 6px; background-position: 0 0, 3px 3px; }
.toolbar > .grip-v:first-child { margin-left: 2px; }
.grip-h { height: 5px; background-size: 6px 6px; background-position: 0 0, 3px 3px; }

.workspace { display: flex; flex: 1; min-height: 0; }
.layerbar { width: 55px; flex: none; }
.layerbar > .grip-h { display: block; margin: 6px 4px 0 3px; }
.layerbar > .grip-h:last-child { margin-top: 10px; }
.layer-tool { display: flex; align-items: center; height: 34px; padding-left: 2px; }
.layer-tool .drop { margin-left: -2px; }

.dock { display: flex; flex-direction: column; flex: none; }
.left-dock { width: 252px; border-left: 1px solid #b4b4b4; }
.right-dock { width: 450px; }
.dock-title { display: flex; align-items: center; height: 22px; padding: 2px 1px 0 4px; flex: none; }
.dock-title .grip-h { flex: 1; }
.dock-title h2 { font-size: 13px; line-height: 20px; margin: 0 13px; }
.dock-title button { width: 15px; height: 15px; margin-left: 1px; border: 1px solid #777; border-radius: 3px; background: #fafafa; display: grid; place-items: center; }
.dock-title .grip-h + button { margin-left: 5px; }
.dock-title button svg { width: 11px; height: 11px; fill: none; stroke: #000; stroke-width: 1.6px; }
.dock-tools { display: flex; align-items: center; height: 32px; padding-left: 1px; flex: none; }
.mini { width: 27px; height: 24px; display: grid; place-items: center; }
.mini svg { width: 16px; height: 16px; }
.dock-tools .drop { width: 14px; }

.tree { list-style: none; border: 1px solid #b5b5b5; border-radius: 2px; background: #fff; overflow: hidden; min-height: 0; }
.browser-tree { flex: 540 1 0; padding-top: 2px; }
.layer-tree { flex: 208 1 0; padding-top: 1px; }
.tree li { display: flex; align-items: center; height: 20px; }
.tree .dir { height: 16px; }
.tree li > svg { width: 20px; height: 20px; margin: 0 6px 0 1px; }
.tree .dir > svg { width: 16px; height: 16px; margin: 0 5px 0 1px; }
.browser-tree .current { background: #efefef; width: 204px; }
.branch { position: relative; width: 22px; align-self: stretch; flex: none; }
.branch::before { content: ""; position: absolute; left: 10px; top: 0; bottom: 0; border-left: 1px dotted #999; }
.branch::after { content: ""; position: absolute; left: 10px; right: 2px; top: 50%; border-top: 1px dotted #999; }
li:last-child .branch::before { bottom: 50%; }
.branch i {
  position: absolute; z-index: 1; left: 6px; top: 3px; width: 9px; height: 9px; border: 1px solid #999;
  background: linear-gradient(#555, #555) center / 5px 1px no-repeat, linear-gradient(#555, #555) center / 1px 5px no-repeat, #fff;
}
.layer-tree li { height: 18px; }
.layer-tree .current { background: #efefef; }
.layer-tree label { display: flex; align-items: center; height: 18px; font-size: 15px; line-height: 18px; white-space: nowrap; }
.layer-tree .current b { font-size: 16px; text-decoration: underline; text-underline-offset: 2px; }
.layer-tree .more { font-family: "Noto Sans CJK SC", sans-serif; line-height: 18px; }
.swatch { width: 18px; height: 18px; margin: 0 6px; border: 1px solid #1c3f45; }
input[type="checkbox"] { appearance: none; position: relative; width: 16px; height: 16px; border: 1px solid #bbb; border-radius: 1px; background: #f8f8f8; flex: none; }
input[type="checkbox"]:checked::before {
  content: ""; position: absolute; inset: 1px; background: #000;
  clip-path: polygon(0 20%, 20% 0, 50% 30%, 80% 0, 100% 20%, 70% 50%, 100% 80%, 80% 100%, 50% 70%, 20% 100%, 0 80%, 30% 50%);
}
.split-h, .split-v { background-image: conic-gradient(at 2px 2px, transparent 270deg, #c6c6c6 0); background-size: 5px 5px; flex: none; }
.split-h { height: 3px; width: 80px; margin: 2px auto 3px; }
.split-v { width: 3px; height: 284px; margin: 0 2px; align-self: center; }

.map { flex: 1; min-width: 0; border: 1px solid #b5b5b5; border-radius: 2px; background: #fff; }
.map svg { display: block; }
.map polygon { fill: #1ed35f; stroke: #000; stroke-width: 1.3px; }

.results { flex: 1; min-height: 0; border: 1px solid #b5b5b5; background: #fff; }
.results table { width: 100%; border-collapse: collapse; table-layout: fixed; }
.results th { height: 26px; padding: 1px 4px 0; border: 1px solid #888; background: linear-gradient(#fdfdfd, #e6e6e6); font-weight: normal; text-align: left; }
.results th:first-child { width: 252px; }
.result-form { display: flex; flex-direction: column; gap: 7px; padding: 6px 5px 6px 4px; flex: none; }
.form-row { display: flex; align-items: center; }
.form-row > label:first-child { width: 39px; }
.mode { width: 212px; flex: none; }
.view { width: 86px; flex: none; }
.dim { color: #8c8c8c; }
.auto { display: flex; align-items: center; gap: 6px; margin-left: auto; }
.result-form .auto { margin-right: 8px; }
.help { width: 58px; margin-left: auto; }
.result-form .form-row .push { height: 24px; border-color: #8a8a8a; }

.combo { position: relative; display: flex; }
.combo select { appearance: none; width: 100%; height: 21px; padding: 1px 20px 0 3px; border: 1px solid #b5b5b5; border-radius: 3px; background: linear-gradient(#fafafa, #dedede); opacity: 1; line-height: 18px; }
.combo::after { content: ""; position: absolute; right: 5px; top: 9px; border: 4px solid transparent; border-top-color: currentColor; border-bottom: 0; pointer-events: none; }
.combo::before { content: ""; position: absolute; right: 16px; top: 1px; bottom: 1px; border-left: 1px solid #b5b5b5; pointer-events: none; }
.push { height: 28px; border: 1px solid #b5b5b5; border-radius: 3px; background: linear-gradient(#fafafa, #dedede); }

.statusbar { position: relative; display: flex; align-items: center; height: 34px; padding-top: 2px; flex: none; }
.statusbar p { flex: 1; padding-left: 6px; }
.statusbar > label { flex: none; white-space: nowrap; }
.coord { width: 221px; height: 21px; border: 1px solid #b5b5b5; border-radius: 2px; text-align: center; }
.coord-label { margin-right: 5px; }
.extent { width: 20px; height: 20px; margin: 0 14px 0 5px; flex: none; }
.scale-label { margin-right: 4px; }
.scale { width: 117px; flex: none; }
.scale select { background: #fff; }
.lock { width: 16px; height: 20px; margin: 0 16px 0 7px; flex: none; }
.mag-label { margin-right: 6px; }
.rot-label { margin: 0 9px 0 10px; }
.spin { display: flex; width: 84px; height: 21px; border: 1px solid #b5b5b5; border-radius: 2px; background: #fff; flex: none; }
.spin input { width: 67px; padding-left: 3px; border: 0; background: none; }
.spin > span { display: flex; flex-direction: column; width: 15px; border-left: 1px solid #b5b5b5; background: #efefef; }
.spin button { flex: 1; display: grid; place-items: center; }
.spin button::before { content: ""; border: 4px solid transparent; border-bottom-color: #000; border-top: 0; }
.spin button + button { border-top: 1px solid #b5b5b5; }
.spin button + button::before { border: 4px solid transparent; border-top-color: #000; border-bottom: 0; }
.render { display: flex; align-items: center; gap: 5px; margin: 0 19px 0 8px; }
.crs { display: flex; align-items: center; gap: 4px; width: 222px; flex: none; white-space: nowrap; }
.crs svg { width: 20px; height: 20px; }
.ime { position: absolute; right: 0; bottom: 0; display: flex; align-items: center; width: 90px; height: 27px; padding-left: 6px; background: #fff; }
.ime i { width: 2px; height: 24px; border-left: 2px dotted #bbb; }
.ime b { width: 20px; height: 20px; margin: 0 8px 0 7px; border: 2px solid #888; font: 18px/16px "Liberation Sans", sans-serif; text-align: center; }
.ime svg { width: 20px; height: 20px; }
.ime .ime-more { width: 8px; height: 16px; margin-left: 12px; }

.taskbar { height: 36px; overflow: hidden; background: #050a11; color: #fff; flex: none; }
.task-inner { display: flex; height: 50px; }
.task { width: 62px; height: 50px; display: grid; place-items: center; flex: none; }
.task:first-child { width: 60px; }
.task svg { width: 29px; height: 29px; }
.task.running { background: #33373c; }
.tray { display: flex; align-items: center; margin-left: auto; font: 15px/21px "Open Sans", "Noto Sans CJK SC", sans-serif; }
.tray svg { width: 20px; height: 20px; margin-right: 13px; fill: none; stroke: #fff; stroke-width: 1.4px; }
.lang { width: 20px; font-size: 17px; }
.clock { width: 96px; margin: 0 12px 0 2px; text-align: center; align-self: flex-start; padding-top: 3px; }
.tray .notice { margin-right: 31px; }

.dialog { position: absolute; left: 430px; top: 474px; width: 500px; border: 1px solid #8f8fdc; background: #efefef; box-shadow: 0 4px 16px 2px rgba(0, 0, 0, .35); }
.dialog-title { display: flex; align-items: center; height: 37px; padding: 0 2px 0 10px; background: #fff; }
.dialog-title h2 { flex: 1; margin-left: 4px; font: 16px/37px "Open Sans", sans-serif; }
.dialog-title button { width: 57px; height: 30px; display: grid; place-items: center; font: 16px/30px "Open Sans", sans-serif; }
.dialog-title button svg { width: 14px; height: 14px; stroke: #000; }
.dialog-body { padding: 10px 11px 11px; }
fieldset { min-width: 0; margin: 0 0 3px; padding: 11px 12px 12px; border: 1px solid #b9b9b9; border-radius: 3px; }
fieldset.inner { margin: 4px 0 0; padding-top: 10px; }
legend { margin-left: -6px; padding: 2px 5px 0; color: #333; font-size: 15px; font-weight: bold; line-height: 18px; }
.radios { display: grid; grid-template-columns: 70px 129px 128px 1fr; height: 20px; margin-bottom: 6px; }
.radios label { display: flex; align-items: center; gap: 7px; }
input[type="radio"] { appearance: none; width: 15px; height: 15px; border: 1px solid #b0b0b0; border-radius: 50%; background: #fff; }
input[type="radio"]:checked { border: 2px solid #5fa2d8; background: #000; }
.field { display: flex; align-items: center; }
.field .combo { flex: 1; }
.enc-label { width: 70px; }
.type-label { width: 38px; }
.conn-buttons { display: grid; grid-template-columns: repeat(3, 1fr); gap: 6px; margin-top: 6px; }
.actions { display: flex; justify-content: flex-end; gap: 10px; margin-top: 6px; }
.actions .push { width: 93px; font: 15px/26px "Noto Sans CJK SC", sans-serif; }
.push.default { border-color: #666; }

.speed { position: absolute; right: -33px; top: 140px; width: 56px; height: 56px; border: 2px solid #e3f0e4; border-radius: 50%; background: rgba(178, 224, 184, .85); color: #fff; font: bold 14px/52px "Open Sans", sans-serif; }
.speed span { padding-left: 5px; }
.marks { position: absolute; inset: 0; width: 100%; height: 100%; pointer-events: none; }
</style>
